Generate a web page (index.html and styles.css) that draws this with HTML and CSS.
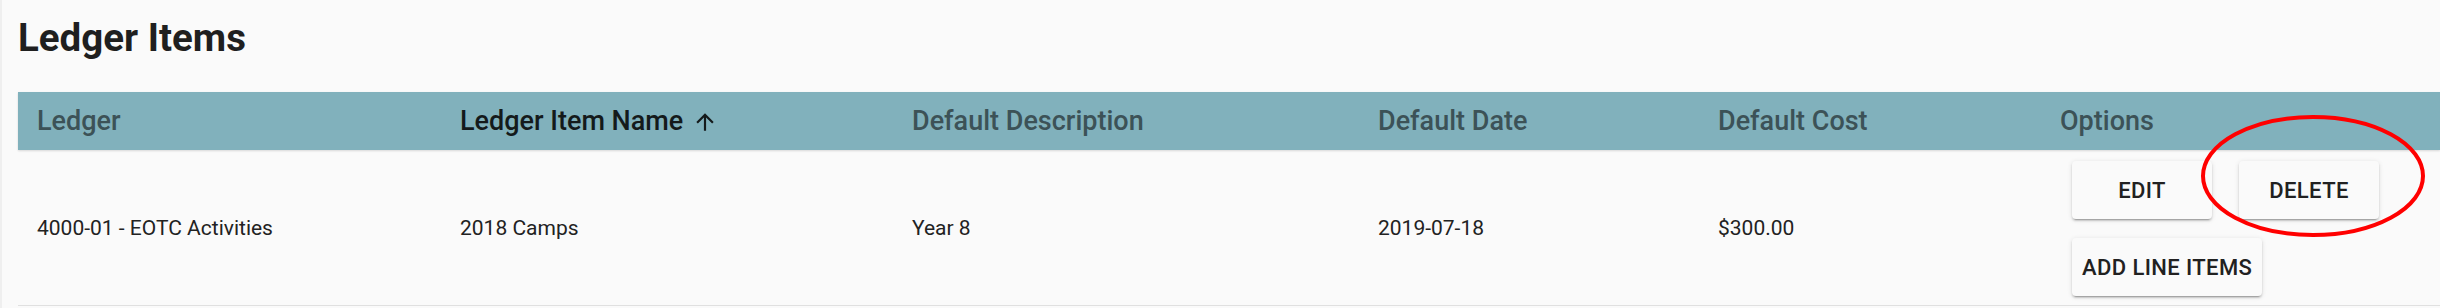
FILE: index.html
```html
<!DOCTYPE html>
<html lang="en">
<head>
  <meta charset="UTF-8">
  <title>Ledger Items</title>
  <link rel="stylesheet" href="styles.css">
</head>

<body>
<div class="page">
  <h1 class="page-title">Ledger Items</h1>

  <table class="ledger-table">
    <colgroup>
      <col class="col-ledger">
      <col class="col-name">
      <col class="col-desc">
      <col class="col-date">
      <col class="col-cost">
      <col class="col-options">
    </colgroup>
    <thead>
      <tr>
        <th>Ledger</th>
        <th class="sorted">
          Ledger Item Name
          <svg class="sort-arrow" viewBox="0 0 24 24" width="26" height="26">
            <path d="M4 12l1.41 1.41L11 7.83V20h2V7.83l5.58 5.59L20 12l-8-8-8 8z"/>
          </svg>
        </th>
        <th>Default Description</th>
        <th>Default Date</th>
        <th>Default Cost</th>
        <th>Options</th>
      </tr>
    </thead>
    <tbody>
      <tr>
        <td>4000-01 - EOTC Activities</td>
        <td>2018 Camps</td>
        <td>Year 8</td>
        <td>2019-07-18</td>
        <td>$300.00</td>
        <td class="options">
          <div class="actions">
            <button class="btn">EDIT</button>
            <button class="btn">DELETE</button>
            <button class="btn">ADD LINE ITEMS</button>
          </div>
        </td>
      </tr>
    </tbody>
  </table>

  <!-- annotation round the delete button -->
  <svg class="marker" width="228" height="126" viewBox="0 0 228 126">
    <ellipse cx="114" cy="63" rx="110" ry="59" fill="none" stroke="#ff0000" stroke-width="4"/>
  </svg>
</div>
</body>
</html>
```

FILE: styles.css
```css
* {
  margin: 0;
  padding: 0;
  box-sizing: border-box;
}

body {
  background: #fafafa;
  font-family: Roboto, "Helvetica Neue", Arial, sans-serif;
  color: #212121;
  width: 2440px;
  overflow: hidden;
}

.page {
  position: relative;
  min-height: 308px;
  border-left: 2px solid #efefef;
  padding-left: 16px;
}

.page-title {
  font-size: 38.5px;
  font-weight: 700;
  line-height: 48px;
  color: #1f1f1f;
  padding-top: 14px;
  margin-bottom: 30px;
}

.ledger-table {
  width: 2422px;
  table-layout: fixed;
  border-collapse: collapse;
}

.col-ledger { width: 423px; }
.col-name { width: 452px; }
.col-desc { width: 466px; }
.col-date { width: 340px; }
.col-cost { width: 342px; }
.col-options { width: 399px; }

thead tr {
  background: #81b1bc;
  box-shadow: 0 1px 2px rgba(0, 0, 0, 0.14);
}

th {
  height: 58px;
  padding: 0 19px;
  text-align: left;
  font-size: 27px;
  font-weight: 500;
  color: #3c5257;
  white-space: nowrap;
}

th.sorted {
  color: #141a1b;
}

.sort-arrow {
  fill: #141a1b;
  vertical-align: -5px;
  margin-left: 2px;
}

td {
  padding: 0 19px;
  font-size: 21px;
  color: #222;
  vertical-align: middle;
  border-bottom: 1px solid #e0e0e0;
}

td.options {
  padding-top: 1px;
  padding-right: 0;
}

.actions {
  display: flex;
  flex-wrap: wrap;
}

.btn {
  height: 58px;
  min-width: 140px;
  padding: 0 10px;
  margin: 10px 15px 9px 12px;
  border: none;
  border-radius: 4px;
  background: #fafafa;
  font-family: Roboto, "Helvetica Neue", Arial, sans-serif;
  font-size: 22px;
  font-weight: 500;
  letter-spacing: 0.4px;
  color: #212121;
  box-shadow: 0 3px 1px -2px rgba(0, 0, 0, 0.2), 0 2px 2px 0 rgba(0, 0, 0, 0.14), 0 1px 5px 0 rgba(0, 0, 0, 0.12);
}

.marker {
  position: absolute;
  left: 2197px;
  top: 113px;
}
```
